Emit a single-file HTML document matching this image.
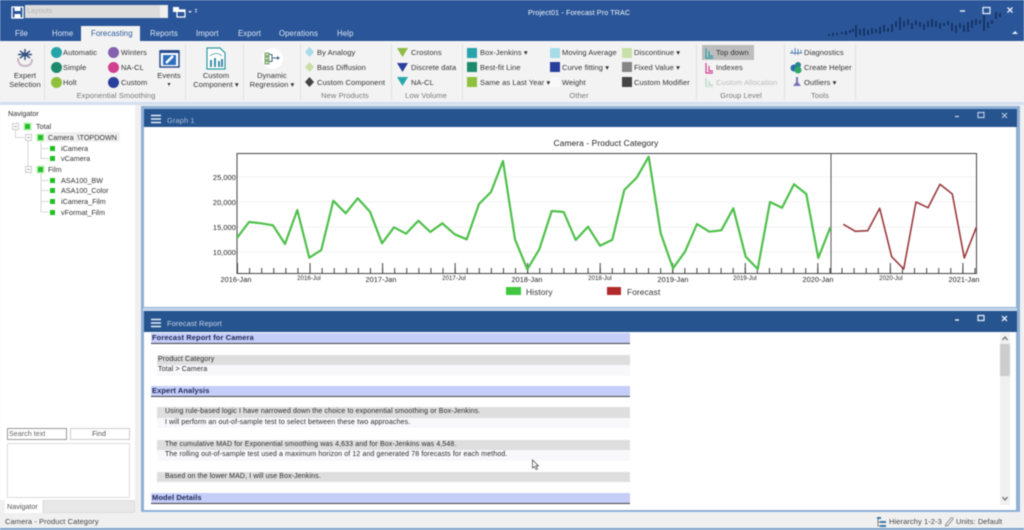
<!DOCTYPE html>
<html><head><meta charset="utf-8"><style>
html,body{margin:0;padding:0;width:1024px;height:530px;overflow:hidden;background:#f0f0f0}
#r{position:relative;width:1024px;height:530px;overflow:hidden;filter:blur(.5px);font-family:"Liberation Sans",sans-serif;font-size:7.5px;color:#333}
#r div,#r span,#r svg{position:absolute}
.t{white-space:nowrap;line-height:10px;letter-spacing:.08px}
.c{transform:translate(-50%,0);text-align:center}
.g{color:#777}
.d{border-radius:50%;width:11px;height:11px}
.s{width:10px;height:10px}
.tab{color:#dce6f4;top:29px;font-size:7.8px}
.sep{width:1px;top:44px;height:56px;background:#e0e0e0}
.rep{font-size:7px;color:#2a2a2a;letter-spacing:.12px}
.b{font-weight:bold;font-size:7.5px;color:#1c2454;left:152px;letter-spacing:.1px}
.band{left:151px;width:479px;height:10px;background:#c5cdf9;border-bottom:1px solid #444}
.gr{left:157px;width:473px;height:10.5px;background:#dedede}
.lt{left:157px;width:473px;height:10.5px;background:#f8f8fb}
.tr{font-size:7.2px;color:#333;letter-spacing:0}
.q{width:5px;height:5px;background:#22c022;box-shadow:0 0 0 1.5px #b8f0b8}
.y{font-size:7.4px;color:#222;text-align:right;width:30px;left:206px}
.x1{font-size:7.3px;color:#222}
.x2{font-size:6px;color:#222}
</style></head><body><div id="r">
<!-- title bar -->
<div style="left:0;top:0;width:1024px;height:41px;background:#2a5699"></div>
<svg style="left:11px;top:6px" width="13" height="13" viewBox="0 0 13 13"><path d="M1 1h11v11H1z" fill="none" stroke="#fff" stroke-width="1.3"/><path d="M3.500 1.500h6v3.500h-6zM3.500 8h6v4h-6z" fill="#fff"/></svg>
<div style="left:25px;top:5px;width:143px;height:13px;background:#dcdcdc"></div>
<div style="left:160px;top:5px;width:8px;height:13px;background:#eee"></div>
<span class="t" style="left:27px;top:7px;color:#b5b5b5;font-size:7px">Layouts</span>
<svg style="left:172px;top:6px" width="26" height="12" viewBox="0 0 26 12"><path d="M1 1h6v5H1z" fill="#fff"/><path d="M5 4h8v7H5z" fill="#2a5699" stroke="#fff" stroke-width="1.200"/><path d="M5 4h8v2H5z" fill="#fff"/><path d="M16 5h4l-2 2zM23 3h2v1h-2zM23 5h2l-1 2z" fill="#dfe7f2"/></svg>
<span class="t" style="left:528px;top:8px;font-size:7.2px;font-weight:normal;color:#f4f7fb;letter-spacing:.1px">Project01 - Forecast Pro TRAC</span>
<svg style="left:826px;top:8px" width="176" height="32" viewBox="826 8 176 32"><path d="M829 34v2M833 33v3M837 33v2M842 32v2M846 31v4M850 30v3M853 29v3M856 25v12M860 29v6M864 28v8M868 30v5M872 28v6M876 29v4M880 27v7M884 25v7M888 28v4M892 24v8M896 21v6M900 17v13M904 21v6M908 19v6M912 23v6M916 20v5M920 22v5M924 24v6M928 21v6M932 19v8M936 21v6M940 23v6M944 23v3M948 21v4M952 23v8M956 25v8M960 23v5M964 25v7M968 22v10M972 20v8M976 19v6M980 20v4M984 15v16M988 22v6M992 20v4M996 12v7M1000 13v4" stroke="#10295a" stroke-width="1.500" fill="none"/></svg>
<svg style="left:955px;top:3px" width="65" height="36" viewBox="955 3 65 36"><path d="M960 11h5" stroke="#e8eef8" stroke-width="1.500"/><path d="M983 7.500h7v6h-7z" fill="none" stroke="#e8eef8" stroke-width="1.200"/><path d="M1007.500 7.500l5 5M1012.500 7.500l-5 5" stroke="#e8eef8" stroke-width="1.400"/><path d="M1012 34l3-3 3 3z" fill="#e8eef8"/></svg>
<!-- tabs -->
<span class="t tab" style="left:15px">File</span>
<span class="t tab" style="left:52px">Home</span>
<div style="left:81px;top:26px;width:59px;height:16px;background:#f3f3f3"></div>
<span class="t" style="left:91px;top:29px;color:#2a5a9a;font-size:7.8px">Forecasting</span>
<span class="t tab" style="left:150px">Reports</span>
<span class="t tab" style="left:196px">Import</span>
<span class="t tab" style="left:238px">Export</span>
<span class="t tab" style="left:279px">Operations</span>
<span class="t tab" style="left:337px">Help</span>
<!-- ribbon -->
<div style="left:0;top:41px;width:1024px;height:61px;background:#f3f3f3"></div>
<div class="sep" style="left:44px"></div><div class="sep" style="left:185px"></div><div class="sep" style="left:243px"></div><div class="sep" style="left:300px"></div><div class="sep" style="left:391px"></div><div class="sep" style="left:462px"></div><div class="sep" style="left:696px"></div><div class="sep" style="left:784px"></div><div class="sep" style="left:855px"></div>
<svg style="left:16px;top:48px" width="18" height="19" viewBox="0 0 18 19"><path d="M9 1v11M4 3l10 7M14 3L4 10M2 6.500h14" stroke="#35507f" stroke-width="1.500"/><path d="M2 10q0 8 7 8t7-7" fill="none" stroke="#c9b8c4" stroke-width="2"/></svg>
<span class="t c" style="left:25px;top:71px">Expert</span><span class="t c" style="left:25px;top:80px">Selection</span>
<div class="d" style="left:51px;top:47px;background:#25a5a8"></div><span class="t" style="left:63px;top:48px">Automatic</span>
<div class="d" style="left:51px;top:62px;background:#1e8a6c"></div><span class="t" style="left:63px;top:63px">Simple</span>
<div class="d" style="left:51px;top:77px;background:#8fc03c"></div><span class="t" style="left:63px;top:78px">Holt</span>
<div class="d" style="left:108px;top:47px;background:#8561b0"></div><span class="t" style="left:121px;top:48px">Winters</span>
<div class="d" style="left:108px;top:62px;background:#d1408f"></div><span class="t" style="left:121px;top:63px">NA-CL</span>
<div class="d" style="left:108px;top:77px;background:#2a3f9c"></div><span class="t" style="left:121px;top:78px">Custom</span>
<span class="t c g" style="left:116px;top:91px">Exponential Smoothing</span>
<svg style="left:159px;top:48px" width="21" height="20" viewBox="0 0 21 20"><path d="M1 3h19v16H1z" fill="#fff" stroke="#2a4d90" stroke-width="1.500"/><path d="M1 2h19v3H1z" fill="#2a4d90"/><path d="M4 7h13v10H4z" fill="#2f6fc0"/><path d="M7 15l7-7" stroke="#fff" stroke-width="2.500"/></svg>
<span class="t c" style="left:169px;top:71px">Events</span><span class="t c" style="left:169px;top:80px;font-size:6px">▾</span>
<svg style="left:206px;top:47px" width="20" height="23" viewBox="0 0 20 23"><path d="M1 1h13l5 5v16H1z" fill="#fff" stroke="#2c9aa0" stroke-width="1.200"/><path d="M4 9q6-5 12 0" fill="none" stroke="#7ab" stroke-width="1"/><path d="M4 13h2v7H4zM8 11h2v9H8zM12 14h2v6h-2zM15 12h2v8h-2z" fill="#3a8fa8"/></svg>
<span class="t c" style="left:216px;top:71px">Custom</span><span class="t c" style="left:216px;top:80px">Component ▾</span>
<div style="left:262px;top:48px;width:21px;height:21px;border-radius:50%;background:#fff"></div>
<svg style="left:264px;top:51px" width="18" height="15" viewBox="0 0 18 15"><path d="M1 2h4v3H1zM1 6h4v3H1zM1 10h4v3H1z" fill="#c5dcb0" stroke="#5a8a50" stroke-width=".7"/><path d="M5 3.500h3v7H5M8 7h5" stroke="#4a6a80" fill="none"/><path d="M13 5l3 2-3 2z" fill="#3b6a90"/></svg>
<span class="t c" style="left:272px;top:71px">Dynamic</span><span class="t c" style="left:272px;top:80px">Regression ▾</span>
<svg style="left:304px;top:47px" width="11" height="40" viewBox="0 0 11 40"><path d="M5.500 0l4.500 5-4.500 5-4.500-5z" fill="#a6dbe8"/><path d="M5.500 15l4.500 5-4.500 5-4.500-5z" fill="#c8dfa8"/><path d="M5.500 30l4.500 5-4.500 5-4.500-5z" fill="#444"/></svg>
<span class="t" style="left:317px;top:48px">By Analogy</span>
<span class="t" style="left:317px;top:63px">Bass Diffusion</span>
<span class="t" style="left:317px;top:78px">Custom Component</span>
<span class="t c g" style="left:345px;top:91px">New Products</span>
<svg style="left:397px;top:47px" width="12" height="40" viewBox="0 0 12 40"><path d="M0 1h11L5.500 10z" fill="#8dbb45"/><path d="M0 16h11L5.500 25z" fill="#2a3f9c"/><path d="M0 30h11L5.500 39z" fill="#28a8ad"/></svg>
<span class="t" style="left:411px;top:48px">Crostons</span>
<span class="t" style="left:411px;top:63px">Discrete data</span>
<span class="t" style="left:411px;top:78px">NA-CL</span>
<span class="t c g" style="left:426px;top:91px">Low Volume</span>
<div class="s" style="left:467px;top:48px;background:#27a3ab"></div><span class="t" style="left:480px;top:48px">Box-Jenkins ▾</span>
<div class="s" style="left:467px;top:62px;background:#1e8a6c"></div><span class="t" style="left:480px;top:63px">Best-fit Line</span>
<div class="s" style="left:467px;top:77px;background:#8fc03c"></div><span class="t" style="left:480px;top:78px">Same as Last Year ▾</span>
<div class="s" style="left:550px;top:48px;background:#a6dbe8"></div><span class="t" style="left:562px;top:48px">Moving Average</span>
<div class="s" style="left:550px;top:62px;background:#2a3f9c"></div><span class="t" style="left:562px;top:63px">Curve fitting ▾</span>
<div class="s" style="left:550px;top:77px;background:#f9f9f9"></div><span class="t" style="left:562px;top:78px">Weight</span>
<div class="s" style="left:622px;top:48px;background:#c8dfa8"></div><span class="t" style="left:634px;top:48px">Discontinue ▾</span>
<div class="s" style="left:622px;top:62px;background:#858585"></div><span class="t" style="left:634px;top:63px">Fixed Value ▾</span>
<div class="s" style="left:622px;top:77px;background:#444"></div><span class="t" style="left:634px;top:78px">Custom Modifier</span>
<span class="t c g" style="left:579px;top:91px">Other</span>
<div style="left:702px;top:45px;width:52px;height:15px;background:#bdbdbd"></div>
<svg style="left:705px;top:47px" width="10" height="40" viewBox="0 0 10 40"><path d="M1 1v10h7M4 4v5h4" fill="none" stroke="#2aa0a8" stroke-width="1.200"/><path d="M1 16v10h7M4 19v5h4" fill="none" stroke="#d1408f" stroke-width="1.200"/><path d="M1 31v9h7M4 34v4h4" fill="none" stroke="#b8d8c8" stroke-width="1.200"/></svg>
<span class="t" style="left:716px;top:48px">Top down</span>
<span class="t" style="left:716px;top:63px">Indexes</span>
<span class="t" style="left:716px;top:78px;color:#bbb">Custom Allocation</span>
<span class="t c g" style="left:741px;top:91px">Group Level</span>
<svg style="left:790px;top:47px" width="13" height="40" viewBox="0 0 13 40"><path d="M0 6h12M2 6V3M5 8V1M8 8V2M11 6V3" stroke="#4a7fb0" stroke-width=".9"/><circle cx="4" cy="21" r="3.500" fill="#2a6fa8"/><circle cx="8" cy="18" r="3" fill="#25878a"/><circle cx="8" cy="23" r="3.500" fill="#2ea868"/><path d="M6 30h2v5l3 4H3l3-4z" fill="#7d75b8"/></svg>
<span class="t" style="left:804px;top:48px">Diagnostics</span>
<span class="t" style="left:804px;top:63px">Create Helper</span>
<span class="t" style="left:804px;top:78px">Outliers ▾</span>
<span class="t c g" style="left:820px;top:91px">Tools</span>
<!-- navigator -->
<div style="left:0;top:102px;width:1024px;height:3px;background:#d4e0ee"></div>
<div style="left:0;top:105px;width:135px;height:395px;background:#fff"></div>
<span class="t tr" style="left:8px;top:109px">Navigator</span>
<svg style="left:10px;top:120px" width="60" height="100" viewBox="10 120 60 100"><path d="M15.500 130v7.500h9M28 141v25M41 142v17M41 148.500h8M41 158.500h8M41 173v39M41 180.500h8M41 190.500h8M41 201.500h8M41 212h8" stroke="#ccc" stroke-width=".8" fill="none"/><g fill="#fff" stroke="#bbb" stroke-width=".7"><path d="M12.500 123.500h6v6h-6zM25.500 134.500h6v6h-6zM25.500 166.500h6v6h-6z"/></g><path d="M14 126.500h3M27 137.500h3M27 169.500h3" stroke="#888" stroke-width=".7"/></svg>
<div style="left:46px;top:132px;width:74px;height:10px;background:#f0f0f0"></div>
<div class="q" style="left:25px;top:124px"></div><span class="t tr" style="left:36px;top:122px">Total</span>
<div class="q" style="left:38px;top:135px"></div><span class="t tr" style="left:48px;top:133px">Camera&nbsp;&nbsp;\TOPDOWN</span>
<div class="q" style="left:50px;top:146px;box-shadow:none"></div><span class="t tr" style="left:61px;top:143.500px">iCamera</span>
<div class="q" style="left:50px;top:156px;box-shadow:none"></div><span class="t tr" style="left:61px;top:154px">vCamera</span>
<div class="q" style="left:38px;top:167px"></div><span class="t tr" style="left:48px;top:165px">Film</span>
<div class="q" style="left:50px;top:178px;box-shadow:none"></div><span class="t tr" style="left:61px;top:175.500px">ASA100_BW</span>
<div class="q" style="left:50px;top:188px;box-shadow:none"></div><span class="t tr" style="left:61px;top:186px">ASA100_Color</span>
<div class="q" style="left:50px;top:199px;box-shadow:none"></div><span class="t tr" style="left:61px;top:197px">iCamera_Film</span>
<div class="q" style="left:50px;top:210px;box-shadow:none"></div><span class="t tr" style="left:61px;top:208px">vFormat_Film</span>
<div style="left:7px;top:428px;width:58px;height:10px;border:1px solid #999;background:#fff"></div><span class="t tr" style="left:9px;top:429px;color:#666">Search text</span>
<div style="left:70px;top:428px;width:58px;height:10px;border:1px solid #ccc;background:#fff"></div><span class="t c tr" style="left:99px;top:429px;color:#555">Find</span>
<div style="left:7px;top:443px;width:121px;height:53px;border:1px solid #ddd;background:#fff"></div>
<div style="left:43px;top:500px;width:92px;height:13px;background:#e8e8e8;border:1px solid #ddd;box-sizing:border-box"></div>
<div style="left:5px;top:500px;width:37px;height:13px;background:#fff"></div>
<span class="t tr" style="left:7px;top:502px;color:#555">Navigator</span>
<!-- window borders -->
<div style="left:141px;top:106px;width:879px;height:406px;background:#8fb0d6"></div>
<div style="left:143px;top:308px;width:874px;height:3px;background:#c5d5e8"></div>
<!-- graph -->
<div style="left:144px;top:109px;width:873px;height:18px;background:#26548f"></div>
<div style="left:144px;top:127px;width:872px;height:180px;background:#fff"></div>
<svg style="left:150px;top:114px" width="12" height="10" viewBox="0 0 12 10"><path d="M1 1.500h10M1 5h10M1 8.500h10" stroke="#e8eef8" stroke-width="1.600"/></svg>
<span class="t" style="left:167px;top:116px;color:#a8bcd8">Graph 1</span>
<svg style="left:955px;top:110px" width="60" height="16" viewBox="955 110 60 16"><path d="M955 116.500h4" stroke="#b8c8e0" stroke-width="1.400"/><path d="M978 112.500h6v5h-6z" fill="none" stroke="#b8c8e0" stroke-width="1.200"/><path d="M1002 113l5 5M1007 113l-5 5" stroke="#b8c8e0" stroke-width="1.200"/></svg>
<span class="t c" style="left:606px;top:138px;font-size:8.4px;color:#222;letter-spacing:.1px">Camera - Product Category</span>
<svg style="left:0;top:0" width="1024" height="310" viewBox="0 0 1024 310">
<path d="M237 177h739M237 202h739M237 227h739M237 252h739" stroke="#f2f2f2" stroke-width="1"/>
<path d="M237 153.500H976.500V273.500H237Z" fill="none" stroke="#444" stroke-width="1"/>
<path d="M237 270.500H977" stroke="#444" stroke-width="5" stroke-dasharray="1 11.090" fill="none"/>
<path d="M237 268H977" stroke="#444" stroke-width="10" stroke-dasharray="1 71.540" fill="none"/>
<path d="M831 153v121" stroke="#555" stroke-width="1"/>
<polyline fill="none" stroke="#4fc04c" stroke-width="2.200" stroke-linejoin="round" points="236.700,238.300 249,222 261,223.300 273,225.300 285,244 297.300,210 309.300,257.700 321.300,250 333.300,200.700 345.700,213.300 357.700,198.300 370,211.700 382,243.300 394,227.300 406,233.700 418.300,220.700 430.300,232 442.300,223.300 454.700,234.300 466.700,239.300 479,204 491,192 503,161 515,239.300 527.300,269.300 539.300,249.300 551.700,211 563.700,212 575.700,240 588,226.700 600,245.700 612.300,239.700 624.300,190 636.700,177.700 648.700,156.700 660.700,233.300 673,268.300 685,251.700 697,224 709.300,231.700 721.300,230.300 733.300,208.300 745.700,256.700 757.700,269 770,202 782,207.700 794,184.300 806.300,194 818.300,258 830.300,227.300"/>
<polyline fill="none" stroke="#9a3a3e" stroke-width="1.600" stroke-linejoin="round" points="843.300,224.300 855.300,231.300 867.700,230.700 879.700,208.300 891.700,256.700 903.700,269 916,202 928,207.700 940,184.300 952.300,194 964.300,258 976.300,227.300"/>
</svg>
<span class="t y" style="top:173px">25,000</span><span class="t y" style="top:198px">20,000</span><span class="t y" style="top:223px">15,000</span><span class="t y" style="top:248px">10,000</span>
<span class="t c x1" style="left:236px;top:275px">2016-Jan</span><span class="t c x2" style="left:309px;top:274px">2016-Jul</span>
<span class="t c x1" style="left:381px;top:275px">2017-Jan</span><span class="t c x2" style="left:454px;top:274px">2017-Jul</span>
<span class="t c x1" style="left:527px;top:275px">2018-Jan</span><span class="t c x2" style="left:600px;top:274px">2018-Jul</span>
<span class="t c x1" style="left:673px;top:275px">2019-Jan</span><span class="t c x2" style="left:745px;top:274px">2019-Jul</span>
<span class="t c x1" style="left:818px;top:275px">2020-Jan</span><span class="t c x2" style="left:891px;top:274px">2020-Jul</span>
<span class="t c x1" style="left:964px;top:275px">2021-Jan</span>
<div style="left:506px;top:287px;width:15px;height:8px;background:#3fc73f"></div><span class="t" style="left:526px;top:287px;font-size:8.4px;color:#333">History</span>
<div style="left:607px;top:287px;width:14px;height:8px;background:#b02a2a"></div><span class="t" style="left:627px;top:287px;font-size:8.4px;color:#333">Forecast</span>
<!-- report -->
<div style="left:144px;top:311px;width:873px;height:21px;background:#26548f"></div>
<div style="left:144px;top:332px;width:872px;height:178px;background:#fff"></div>
<svg style="left:150px;top:318px" width="12" height="10" viewBox="0 0 12 10"><path d="M1 1.500h10M1 5h10M1 8.500h10" stroke="#e8eef8" stroke-width="1.600"/></svg>
<span class="t" style="left:167px;top:319px;color:#c8d6ea">Forecast Report</span>
<svg style="left:950px;top:312px" width="66" height="18" viewBox="950 312 66 18"><path d="M955 320h4" stroke="#e8eef8" stroke-width="1.500"/><path d="M978 315.500h6v5h-6z" fill="none" stroke="#e8eef8" stroke-width="1.200"/><path d="M1002 316l5 5M1007 316l-5 5" stroke="#e8eef8" stroke-width="1.300"/></svg>
<div class="band" style="top:333px"></div><span class="t b" style="top:333px">Forecast Report for Camera</span>
<div class="gr" style="top:354.500px"></div><div class="lt" style="top:365px"></div>
<span class="t rep" style="left:158px;top:355px">Product Category</span><span class="t rep" style="left:158px;top:365px">Total &gt; Camera</span>
<div class="band" style="top:386px"></div><span class="t b" style="top:386px">Expert Analysis</span>
<div class="gr" style="top:407px"></div><div class="lt" style="top:417.500px"></div>
<span class="t rep" style="left:165px;top:407px">Using rule-based logic I have narrowed down the choice to exponential smoothing or Box-Jenkins.</span>
<span class="t rep" style="left:165px;top:418px">I will perform an out-of-sample test to select between these two approaches.</span>
<div class="gr" style="top:439.500px"></div><div class="lt" style="top:450px"></div>
<span class="t rep" style="left:165px;top:439.500px">The cumulative MAD for Exponential smoothing was 4,633 and for Box-Jenkins was 4,548.</span>
<span class="t rep" style="left:165px;top:450px">The rolling out-of-sample test used a maximum horizon of 12 and generated 78 forecasts for each method.</span>
<div class="gr" style="top:471.500px"></div>
<span class="t rep" style="left:165px;top:471.500px">Based on the lower MAD, I will use Box-Jenkins.</span>
<div class="band" style="top:493px"></div><span class="t b" style="top:493px">Model Details</span>
<svg style="left:531px;top:459px" width="9" height="12" viewBox="0 0 9 12"><path d="M1.500 1v8l2-1.500 1.500 3 1.500-.7-1.500-3h2.500z" fill="#fff" stroke="#555" stroke-width=".8"/></svg>
<div style="left:1000px;top:333px;width:10px;height:172px;background:#f0f0f0"></div>
<div style="left:1000px;top:344px;width:10px;height:32px;background:#cdcdcd"></div>
<svg style="left:1000px;top:333px" width="10" height="172" viewBox="0 0 10 172"><path d="M2.500 7L5 4l2.500 3M2.500 164L5 167l2.500-3" fill="none" stroke="#666" stroke-width="1.200"/></svg>
<!-- status -->
<div style="left:0;top:513px;width:1024px;height:15px;background:#f0f0f0"></div>
<div style="left:0;top:528px;width:1024px;height:2px;background:#7fa3cc"></div>
<span class="t" style="left:5px;top:517px;color:#444">Camera - Product Category</span>
<svg style="left:876px;top:516px" width="11" height="11" viewBox="0 0 11 11"><path d="M1 1h4v2H1zM4 5h6v2H4zM4 9h6v2H4z" fill="#3c78a8"/><path d="M2 3v7h2M2 6h2" stroke="#666" stroke-width=".8" fill="none"/></svg>
<span class="t" style="left:889px;top:517px;color:#444">Hierarchy 1-2-3</span>
<svg style="left:944px;top:516px" width="10" height="11" viewBox="0 0 10 11"><path d="M2 8l5-6q2-1 2 1L4 9.500 1.500 10z" fill="none" stroke="#888" stroke-width=".9"/></svg>
<span class="t" style="left:956px;top:517px;color:#444">Units: Default</span>
</div></body></html>
